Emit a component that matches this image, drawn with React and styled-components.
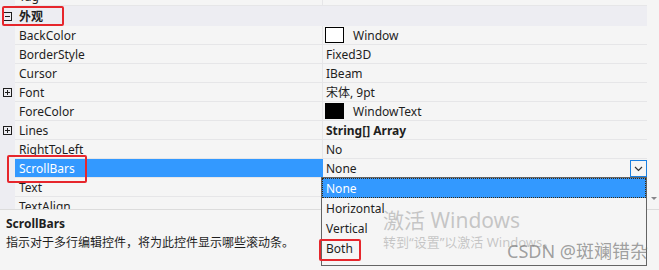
import React from "react";
import styled, { createGlobalStyle } from "styled-components";

const GlobalStyle = createGlobalStyle`
  html, body {
    margin: 0;
    padding: 0;
    background: #f5f5f5;
  }
  body {
    font-family: "Noto Sans", "Noto Sans CJK SC", sans-serif;
    font-size: 12px;
    color: #1e1e1e;
  }
`;

const props = [
  { name: "BackColor", value: "Window", swatch: "#fff" },
  { name: "BorderStyle", value: "Fixed3D" },
  { name: "Cursor", value: "IBeam" },
  { name: "Font", value: "宋体, 9pt", expand: true },
  { name: "ForeColor", value: "WindowText", swatch: "#000" },
  { name: "Lines", value: "String[] Array", expand: true, bold: true },
  { name: "RightToLeft", value: "No" },
  { name: "ScrollBars", value: "None", selected: true },
  { name: "Text", value: "" },
  { name: "TextAlign", value: "" },
];

const options = ["None", "Horizontal", "Vertical", "Both"];

const Frame = styled.div`
  position: relative;
  width: 659px;
  height: 270px;
  overflow: hidden;
  display: flex;
  flex-direction: column;
  background: #f5f5f5;
`;

const GridArea = styled.div`
  height: 209px;
  display: flex;
  overflow: hidden;
`;

const RowList = styled.div`
  width: 647px;
  display: flex;
  flex-direction: column;
  margin-top: -13px;
`;

const Row = styled.div`
  display: grid;
  grid-template-columns: 15px 307px 1px 1fr;
  height: 19px;
  flex-shrink: 0;
`;

const Gutter = styled.div`
  background: #ededf2;
  display: flex;
  align-items: center;
  padding-left: 3px;
`;

const NameCell = styled.div`
  display: flex;
  align-items: center;
  padding-left: 4px;
  border-bottom: 1px solid #e6e6e8;
  background: ${(p) => (p.$selected ? "#3399ff" : "transparent")};
  color: ${(p) => (p.$selected ? "#fff" : "#1e1e1e")};
  white-space: nowrap;
`;

const Divider = styled.div`
  background: ${(p) => (p.$selected ? "#3399ff" : "#e6e6e8")};
`;

const ValueCell = styled.div`
  display: flex;
  align-items: center;
  padding-left: 3px;
  border-bottom: 1px solid #e6e6e8;
  font-weight: ${(p) => (p.$bold ? 700 : 400)};
  white-space: nowrap;
`;

const Swatch = styled.span`
  width: 19px;
  height: 16px;
  box-sizing: border-box;
  border: 1px solid #000;
  background: ${(p) => p.$color};
  margin-right: 9px;
  margin-left: -1px;
`;

const DropButton = styled.div`
  margin-left: auto;
  width: 17px;
  height: 17px;
  box-sizing: border-box;
  border: 1px solid #1a7fe0;
  display: flex;
  align-items: center;
  justify-content: center;
  margin-bottom: -1px;
`;

const CategoryRow = styled.div`
  height: 20px;
  flex-shrink: 0;
  background: #ededf2;
  display: flex;
  align-items: center;
  padding-left: 3px;
  font-weight: 700;
  gap: 7px;
`;

const ScrollCol = styled.div`
  width: 12px;
  display: flex;
  flex-direction: column;
  justify-content: flex-end;
  align-items: center;
  padding-bottom: 9px;
  box-sizing: border-box;
`;

const DownArrow = styled.div`
  width: 0;
  height: 0;
  border-left: 3px solid transparent;
  border-right: 3px solid transparent;
  border-top: 3px solid #86868a;
  margin-left: 2px;
`;

const DescPanel = styled.div`
  flex: 1;
  border-top: 1px solid #dcdcdc;
  padding: 6px 6px 0;
  display: flex;
  flex-direction: column;
  gap: 3px;
`;

const DescTitle = styled.div`
  font-weight: 700;
  line-height: 16px;
`;

const DescText = styled.div`
  line-height: 16px;
`;

const DropList = styled.div`
  position: absolute;
  left: 321px;
  top: 177px;
  width: 326px;
  height: 89px;
  box-sizing: border-box;
  border: 1px solid #646464;
  background: #f5f5f5;
  display: flex;
  flex-direction: column;
`;

const Option = styled.div`
  height: 20px;
  box-sizing: border-box;
  display: flex;
  align-items: center;
  padding-left: 3px;
  background: ${(p) => (p.$active ? "#3399ff" : "transparent")};
  color: ${(p) => (p.$active ? "#fff" : "#1e1e1e")};
  border: 1px dotted ${(p) => (p.$active ? "#3a2a10" : "transparent")};
`;

const Mark = styled.div`
  position: absolute;
  box-sizing: border-box;
  border: 2px solid #e6262c;
  border-radius: 2px;
`;

const Watermark = styled.div`
  position: absolute;
  white-space: nowrap;
  color: ${(p) => p.$color};
  font-size: ${(p) => p.$size}px;
  line-height: 1;
`;

const ExpandIcon = ({ open }) => (
  <svg width="9" height="9" viewBox="0 0 9 9">
    <rect x="0.5" y="0.5" width="8" height="8" fill="none" stroke="#1e1e1e" />
    <line x1="2" y1="4.5" x2="7" y2="4.5" stroke="#1e1e1e" />
    {!open && <line x1="4.5" y1="2" x2="4.5" y2="7" stroke="#1e1e1e" />}
  </svg>
);

const Chevron = () => (
  <svg width="9" height="6" viewBox="0 0 9 6">
    <polyline points="1,1 4.5,4.5 8,1" fill="none" stroke="#333" strokeWidth="1.2" />
  </svg>
);

export default function App() {
  return (
    <>
      <GlobalStyle />
      <Frame>
        <GridArea>
          <RowList>
            <Row>
              <Gutter />
              <NameCell>Tag</NameCell>
              <Divider />
              <ValueCell />
            </Row>
            <CategoryRow>
              <ExpandIcon open />
              外观
            </CategoryRow>
            {props.map((p) => (
              <Row key={p.name}>
                <Gutter>{p.expand && <ExpandIcon />}</Gutter>
                <NameCell $selected={p.selected}>{p.name}</NameCell>
                <Divider $selected={p.selected} />
                <ValueCell $bold={p.bold}>
                  {p.swatch && <Swatch $color={p.swatch} />}
                  {p.value}
                  {p.selected && (
                    <DropButton>
                      <Chevron />
                    </DropButton>
                  )}
                </ValueCell>
              </Row>
            ))}
          </RowList>
          <ScrollCol>
            <DownArrow />
          </ScrollCol>
        </GridArea>
        <DescPanel>
          <DescTitle>ScrollBars</DescTitle>
          <DescText>指示对于多行编辑控件，将为此控件显示哪些滚动条。</DescText>
        </DescPanel>

        <DropList>
          {options.map((o, i) => (
            <Option key={o} $active={i === 0}>
              {o}
            </Option>
          ))}
        </DropList>

        <Watermark $color="rgba(150,150,150,0.5)" $size={21} style={{ left: 383, top: 210 }}>
          激活 Windows
        </Watermark>
        <Watermark $color="rgba(150,150,150,0.5)" $size={13} style={{ left: 383, top: 236 }}>
          转到“设置”以激活 Windows。
        </Watermark>
        <Watermark $color="rgba(110,110,110,0.65)" $size={18} style={{ left: 507, top: 242 }}>
          CSDN @斑斓错杂
        </Watermark>

        <Mark style={{ left: 2, top: 6, width: 62, height: 20 }} />
        <Mark style={{ left: 7, top: 155, width: 80, height: 28 }} />
        <Mark style={{ left: 319, top: 239, width: 42, height: 22 }} />
      </Frame>
    </>
  );
}
